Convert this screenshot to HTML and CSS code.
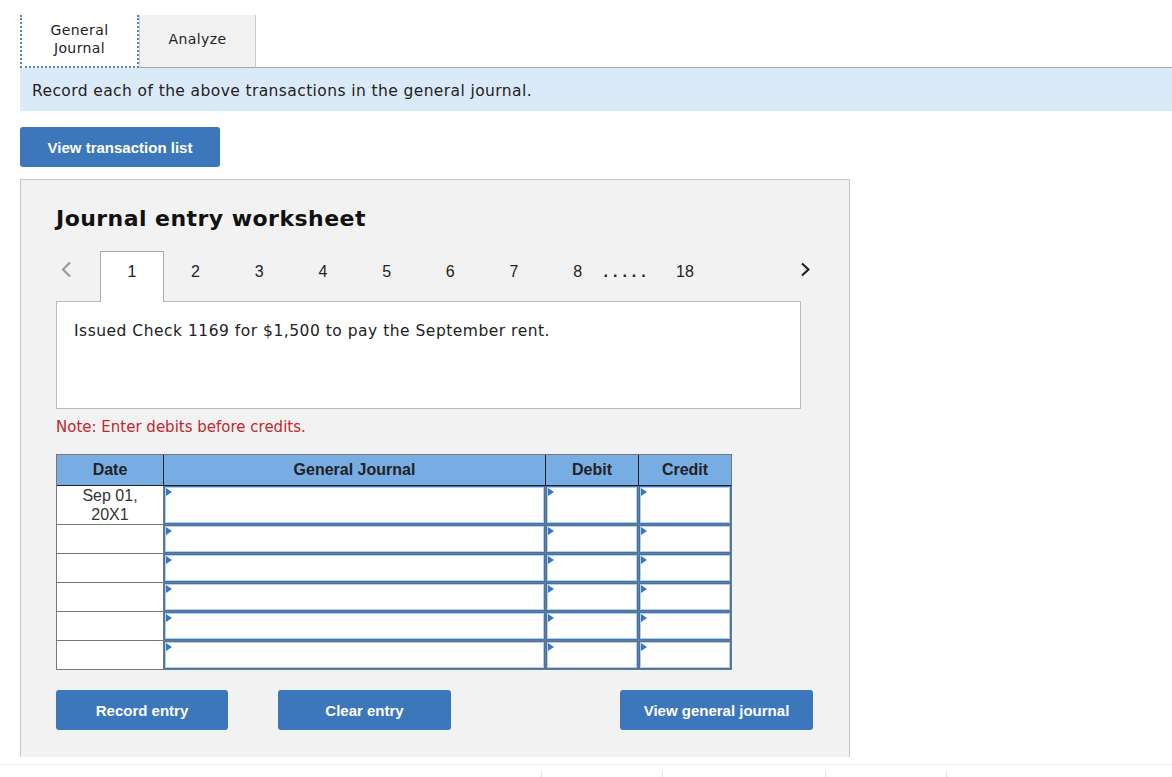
FILE: index.html
```html
<!DOCTYPE html>
<html>
<head>
<meta charset="utf-8">
<title>Journal entry worksheet</title>
<link rel="stylesheet" href="styles.css">
</head>
<body>
<div class="tabs">
  <div class="tab tab-active">General<br>Journal</div>
  <div class="tab tab-plain">Analyze</div>
  <div class="tab-rest"></div>
</div>
<div class="instr">Record each of the above transactions in the general journal.</div>
<div class="btn-row"><button class="btn btn-list">View transaction list</button></div>

<div class="panel">
  <h2 class="ws-title">Journal entry worksheet</h2>
  <div class="pager">
    <span class="pg-prev"><svg width="12" height="17" viewBox="0 0 12 17"><polyline points="10,1.5 3,8.5 10,15.5" fill="none" stroke="#9a9a9a" stroke-width="2.2"/></svg></span>
    <span class="pg pg-cur">1</span>
    <span class="pg">2</span>
    <span class="pg">3</span>
    <span class="pg">4</span>
    <span class="pg">5</span>
    <span class="pg">6</span>
    <span class="pg">7</span>
    <span class="pg">8</span>
    <span class="pg-dots">.....</span>
    <span class="pg pg-last">18</span>
    <span class="pg-next"><svg width="11" height="15" viewBox="0 0 11 15"><polyline points="2,1.5 8.5,7.5 2,13.5" fill="none" stroke="#1a1a1a" stroke-width="2"/></svg></span>
  </div>
  <div class="desc">Issued Check 1169 for $1,500 to pay the September rent.</div>
  <p class="note">Note: Enter debits before credits.</p>
  <table class="jt">
    <thead>
      <tr>
        <th class="c-date">Date</th>
        <th class="c-gj">General Journal</th>
        <th class="c-dr">Debit</th>
        <th class="c-cr">Credit</th>
      </tr>
    </thead>
    <tbody>
      <tr class="row-first">
        <td class="date">Sep 01,<br>20X1</td>
        <td><div class="inp"></div></td>
        <td><div class="inp"></div></td>
        <td><div class="inp"></div></td>
      </tr>
      <tr>
        <td class="date"></td>
        <td><div class="inp"></div></td>
        <td><div class="inp"></div></td>
        <td><div class="inp"></div></td>
      </tr>
      <tr>
        <td class="date"></td>
        <td><div class="inp"></div></td>
        <td><div class="inp"></div></td>
        <td><div class="inp"></div></td>
      </tr>
      <tr>
        <td class="date"></td>
        <td><div class="inp"></div></td>
        <td><div class="inp"></div></td>
        <td><div class="inp"></div></td>
      </tr>
      <tr>
        <td class="date"></td>
        <td><div class="inp"></div></td>
        <td><div class="inp"></div></td>
        <td><div class="inp"></div></td>
      </tr>
      <tr>
        <td class="date"></td>
        <td><div class="inp"></div></td>
        <td><div class="inp"></div></td>
        <td><div class="inp"></div></td>
      </tr>
    </tbody>
  </table>
  <div class="actions">
    <button class="btn btn-rec">Record entry</button>
    <button class="btn btn-clear">Clear entry</button>
    <button class="btn btn-vgj">View general journal</button>
  </div>
</div>

<div class="footer">
  <div class="f-space"></div>
  <div class="f-cell f-a"></div>
  <div class="f-cell f-b"></div>
  <div class="f-cell f-c"></div>
  <div class="f-cell f-d"></div>
</div>
</body>
</html>
```

FILE: styles.css
```css
html, body {
  margin: 0;
  padding: 0;
  overflow: hidden;
}
body {
  font-family: "DejaVu Sans", Verdana, sans-serif;
  color: #222;
  background: #fff;
}

/* top tabs */
.tabs {
  display: flex;
  padding: 15px 0 0 20px;
}
.tab {
  box-sizing: border-box;
  height: 53px;
  font-size: 14px;
  line-height: 18px;
  letter-spacing: 0.4px;
  text-align: center;
  color: #222;
}
.tab-active {
  width: 119px;
  padding-top: 6px;
  background: #fff;
  border: 2px dotted #4a86c8;
  border-top: 0;
}
.tab-plain {
  width: 117px;
  padding-top: 15px;
  background: #f2f2f2;
  border-left: 1px solid #d0d0d0;
  border-right: 1px solid #c8c8c8;
  border-bottom: 1px solid #aaa;
}
.tab-rest {
  flex: 1;
  border-bottom: 1px solid #aaa;
}

.instr {
  margin-left: 20px;
  height: 43px;
  box-sizing: border-box;
  padding: 14px 0 0 12px;
  background: #dbeaf8;
  font-size: 15.5px;
  line-height: 18px;
  letter-spacing: 0.4px;
  color: #222;
}

.btn-row {
  padding: 16px 0 0 20px;
}
.btn {
  display: block;
  height: 40px;
  padding: 0;
  border: 0;
  border-radius: 3px;
  background: #3b77ba;
  color: #fff;
  font-family: "Liberation Sans", Arial, sans-serif;
  font-weight: bold;
  font-size: 15px;
  cursor: pointer;
}
.btn-list { width: 200px; }

/* worksheet panel */
.panel {
  margin: 12px 0 0 20px;
  width: 830px;
  height: 578px;
  box-sizing: border-box;
  padding: 25px 36px 0 35px;
  background: #f2f2f2;
  border: 1px solid #c8c8c8;
  border-bottom: 0;
}
.ws-title {
  margin: 0 0 19px;
  font-size: 22px;
  line-height: 27px;
  letter-spacing: 0.45px;
  font-weight: bold;
  color: #111;
}

.pager {
  display: flex;
  height: 50px;
  font-family: "Liberation Sans", Arial, sans-serif;
  font-size: 16px;
  line-height: 19px;
  color: #222;
}
.pg-prev {
  width: 44px;
  flex: none;
  box-sizing: border-box;
  padding: 10px 0 0 4px;
}
.pg-prev svg, .pg-next svg { display: block; }
.pg {
  width: 63.7px;
  flex: none;
  box-sizing: border-box;
  padding-top: 11px;
  text-align: center;
}
.pg-cur {
  position: relative;
  z-index: 1;
  height: 51px;
  padding-top: 10px;
  background: #fff;
  border: 1px solid #aaa;
  border-bottom: 0;
}
.pg-dots {
  width: 44px;
  flex: none;
  margin-left: -6px;
  padding-top: 11px;
  font-weight: bold;
  letter-spacing: 5px;
}
.pg-last { width: 75px; }
.pg-next {
  margin-left: auto;
  width: 16px;
  flex: none;
  padding-top: 11px;
  display: flex;
  justify-content: center;
  align-items: flex-start;
}

.desc {
  width: 745px;
  height: 108px;
  box-sizing: border-box;
  padding: 20px 0 0 17px;
  background: #fff;
  border: 1px solid #bbb;
  font-size: 15.5px;
  line-height: 18px;
  letter-spacing: 0.5px;
  color: #222;
}
.note {
  margin: 9px 0 18px;
  font-size: 15px;
  line-height: 18px;
  color: #c4262e;
}

/* journal table */
.jt {
  border-collapse: separate;
  border-spacing: 0;
  table-layout: fixed;
  width: 676px;
  border-left: 1px solid #777;
  border-top: 1px solid #777;
  font-family: "Liberation Sans", Arial, sans-serif;
}
.jt th {
  box-sizing: border-box;
  height: 31px;
  padding: 0 0 1px;
  background: #78ade3;
  border-right: 1px solid #222;
  border-bottom: 1px solid #222;
  font-size: 16px;
  font-weight: bold;
  color: #222;
  text-align: center;
  vertical-align: middle;
}
.jt th.c-cr { border-right-color: #777; }
.c-date { width: 107px; }
.c-gj { width: 382px; }
.c-dr { width: 93px; }
.c-cr { width: 93px; }

.jt td {
  padding: 0;
  background: #fff;
  border-right: 1px solid #777;
  border-bottom: 1px solid #777;
  vertical-align: top;
}
.jt td.date {
  text-align: center;
  font-size: 16px;
  line-height: 19px;
  color: #333;
}
.inp {
  position: relative;
  box-sizing: border-box;
  height: 28px;
  background: #fff;
  border: 1px solid #3a76bb;
  box-shadow: inset 0 0 0 1px #b6cfee;
}
.row-first .inp { height: 38px; }
.inp::before {
  content: "";
  position: absolute;
  left: 1px;
  top: 1px;
  border-left: 6px solid #3a76bb;
  border-top: 4px solid transparent;
  border-bottom: 4px solid transparent;
}

.actions {
  display: flex;
  margin-top: 20px;
}
.btn-rec { width: 172px; }
.btn-clear { width: 173px; margin-left: 50px; }
.btn-vgj { width: 193px; margin-left: auto; }

/* bottom strip */
.footer {
  display: flex;
  margin-top: 7px;
  padding-top: 6px;
  height: 6px;
  border-top: 1px solid #ececec;
}
.f-space { width: 541px; flex: none; }
.f-cell {
  flex: none;
  border-left: 1px solid #e6e6e6;
}
.f-a { width: 120px; }
.f-b { width: 162px; }
.f-c { width: 120px; }
.f-d { width: 100px; }
```
